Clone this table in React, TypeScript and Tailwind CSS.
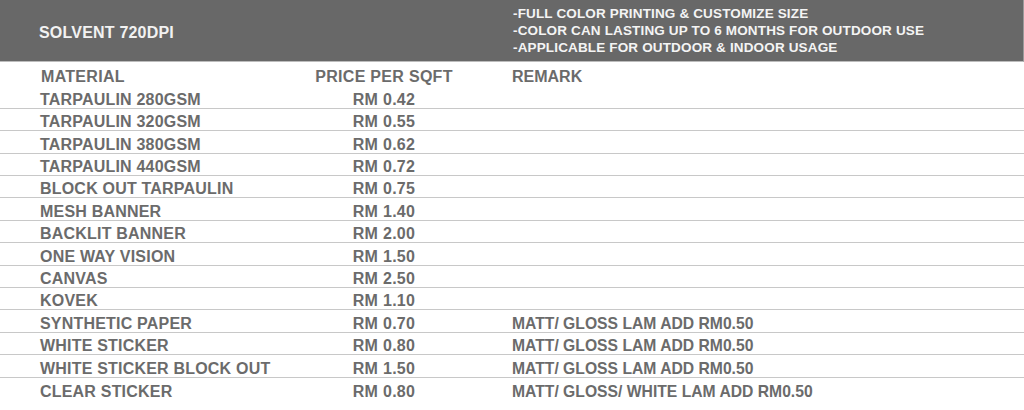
const ROWS = [
  { name: 'TARPAULIN 280GSM', price: 'RM 0.42', remark: '' },
  { name: 'TARPAULIN 320GSM', price: 'RM 0.55', remark: '' },
  { name: 'TARPAULIN 380GSM', price: 'RM 0.62', remark: '' },
  { name: 'TARPAULIN 440GSM', price: 'RM 0.72', remark: '' },
  { name: 'BLOCK OUT TARPAULIN', price: 'RM 0.75', remark: '' },
  { name: 'MESH BANNER', price: 'RM 1.40', remark: '' },
  { name: 'BACKLIT BANNER', price: 'RM 2.00', remark: '' },
  { name: 'ONE WAY VISION', price: 'RM 1.50', remark: '' },
  { name: 'CANVAS', price: 'RM 2.50', remark: '' },
  { name: 'KOVEK', price: 'RM 1.10', remark: '' },
  { name: 'SYNTHETIC PAPER', price: 'RM 0.70', remark: 'MATT/ GLOSS LAM ADD RM0.50' },
  { name: 'WHITE STICKER', price: 'RM 0.80', remark: 'MATT/ GLOSS LAM ADD RM0.50' },
  { name: 'WHITE STICKER BLOCK OUT', price: 'RM 1.50', remark: 'MATT/ GLOSS LAM ADD RM0.50' },
  { name: 'CLEAR STICKER', price: 'RM 0.80', remark: 'MATT/ GLOSS/ WHITE LAM ADD RM0.50' },
];

const NOTES = [
  '-FULL COLOR PRINTING & CUSTOMIZE SIZE',
  '-COLOR CAN LASTING UP TO 6 MONTHS FOR OUTDOOR USE',
  '-APPLICABLE FOR OUTDOOR & INDOOR USAGE',
];

export default function App() {
  return (
    <div className="w-[1024px] h-[410px] bg-white font-['Liberation_Sans',Arial,sans-serif] font-bold overflow-hidden whitespace-nowrap">
      {/* Title bar */}
      <div className="h-[62px] flex bg-[#686868] border-b border-[#bcbcbc] border-r border-r-[#9a9a9a]">
        <div className="w-[472px] pl-[39px] pt-[5px] flex items-center text-[16px] tracking-[0.2px] text-[#f2f2f2]">
          SOLVENT 720DPI
        </div>
        <div className="flex-1 pl-[41px] pt-[2px] flex flex-col justify-center text-[13.5px] tracking-[0.15px] leading-[16.7px] text-[#f4f4f4]">
          {NOTES.map((n) => (
            <div key={n}>{n}</div>
          ))}
        </div>
      </div>

      {/* Column headings */}
      <div className="h-[24.5px] pb-[1.5px] flex items-end text-[16px] tracking-[0.3px] leading-4 text-[#6b6b6b]">
        <div className="w-[256px] pl-[41px]">MATERIAL</div>
        <div className="w-[256px] text-center">PRICE PER SQFT</div>
        <div className="flex-1 tracking-normal">REMARK</div>
      </div>

      {/* Rows */}
      <div>
        {ROWS.map((r, i) => (
          <div
            key={r.name}
            className={`h-[22.4px] flex items-end text-[16px] tracking-[0.3px] leading-4 text-[#6b6b6b] ${
              i < ROWS.length - 1 ? 'border-b border-[#c8c8c8]' : ''
            }`}
          >
            <div className="w-[256px] pl-[40px] tracking-[0.2px]">{r.name}</div>
            <div className="w-[256px] text-center">{r.price}</div>
            <div className="flex-1 text-[15.7px] tracking-normal">{r.remark}</div>
          </div>
        ))}
      </div>
    </div>
  );
}
